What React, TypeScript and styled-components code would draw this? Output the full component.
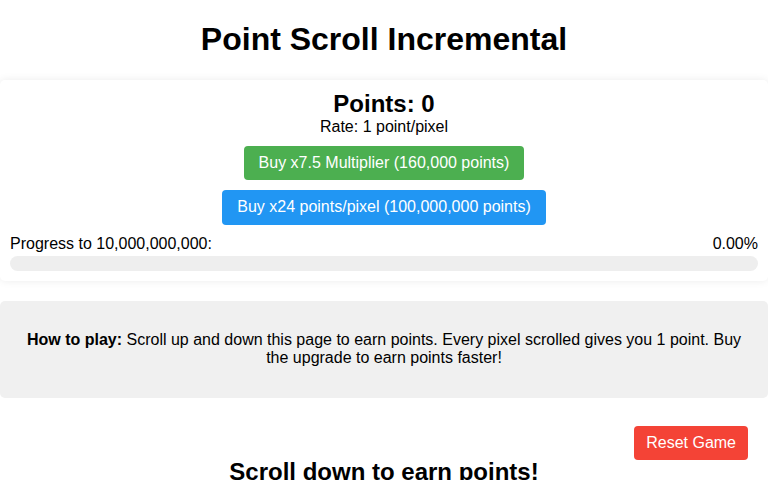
import { useEffect, useState } from "react";
import styled, { createGlobalStyle } from "styled-components";

const GlobalStyle = createGlobalStyle`
  body {
    margin: 0;
    font-family: "Liberation Sans", Arial, sans-serif;
    color: #000;
    background: #fff;
  }
`;

const Page = styled.main`
  max-width: 800px;
  margin: 0 auto;
  text-align: center;
`;

const Title = styled.h1`
  font-size: 32px;
  margin: 21.44px 0;
`;

const Card = styled.section`
  background: #fff;
  border-radius: 5px;
  box-shadow: 0 0 8px rgba(0, 0, 0, 0.08);
  padding: 10px;
`;

const Points = styled.div`
  font-size: 24px;
  font-weight: bold;
`;

const Rate = styled.div`
  font-size: 16px;
`;

const BuyButton = styled.button<{ $color: string }>`
  display: block;
  margin: 10px auto;
  padding: 8px 15px;
  border: none;
  border-radius: 4px;
  background: ${(p) => p.$color};
  color: #fff;
  font-family: inherit;
  font-size: 16px;
  line-height: 18.4px;
  cursor: pointer;
`;

const ProgressRow = styled.div`
  display: flex;
  justify-content: space-between;
  font-size: 16px;
`;

const Track = styled.div`
  height: 15px;
  margin-top: 3px;
  background: #eee;
  border-radius: 10px;
  overflow: hidden;
`;

const Fill = styled.div`
  height: 100%;
  background: #4caf50;
`;

const HowTo = styled.div`
  margin-top: 20px;
  padding: 30px 20px;
  background: #f0f0f0;
  border-radius: 5px;
  font-size: 16px;
  line-height: 18.4px;
`;

const ScrollArea = styled.div`
  padding-top: 60px;
  height: 4000px;
`;

const ScrollHint = styled.h2`
  font-size: 24px;
  margin: 0;
`;

const ResetButton = styled.button`
  position: fixed;
  right: 20px;
  bottom: 20px;
  padding: 8px 12px;
  border: none;
  border-radius: 4px;
  background: #f44336;
  color: #fff;
  font-family: inherit;
  font-size: 16px;
  line-height: 18.4px;
  cursor: pointer;
`;

const GOAL = 10_000_000_000;

const App = () => {
  const [points, setPoints] = useState(0);
  const [rate, setRate] = useState(1);

  useEffect(() => {
    let last = window.scrollY;
    const onScroll = () => {
      const y = window.scrollY;
      setPoints((p) => p + Math.abs(y - last) * rate);
      last = y;
    };
    window.addEventListener("scroll", onScroll);
    return () => window.removeEventListener("scroll", onScroll);
  }, [rate]);

  const pct = Math.min(100, (points / GOAL) * 100);

  return (
    <>
      <GlobalStyle />
      <Page>
        <Title>Point Scroll Incremental</Title>
        <Card>
          <Points>Points: {Math.floor(points).toLocaleString("en-US")}</Points>
          <Rate>
            Rate: {rate} point{rate === 1 ? "" : "s"}/pixel
          </Rate>
          <BuyButton
            $color="#4caf50"
            onClick={() => {
              if (points >= 160000) {
                setPoints(points - 160000);
                setRate(rate * 7.5);
              }
            }}
          >
            Buy x7.5 Multiplier (160,000 points)
          </BuyButton>
          <BuyButton
            $color="#2196f3"
            onClick={() => {
              if (points >= 100000000) {
                setPoints(points - 100000000);
                setRate(rate * 24);
              }
            }}
          >
            Buy x24 points/pixel (100,000,000 points)
          </BuyButton>
          <ProgressRow>
            <span>Progress to 10,000,000,000:</span>
            <span>{pct.toFixed(2)}%</span>
          </ProgressRow>
          <Track>
            <Fill style={{ width: `${pct}%` }} />
          </Track>
        </Card>
        <HowTo>
          <strong>How to play:</strong> Scroll up and down this page to earn
          points. Every pixel scrolled gives you 1 point. Buy the upgrade to earn
          points faster!
        </HowTo>
        <ScrollArea>
          <ScrollHint>Scroll down to earn points!</ScrollHint>
        </ScrollArea>
      </Page>
      <ResetButton
        onClick={() => {
          setPoints(0);
          setRate(1);
        }}
      >
        Reset Game
      </ResetButton>
    </>
  );
};

export default App;
